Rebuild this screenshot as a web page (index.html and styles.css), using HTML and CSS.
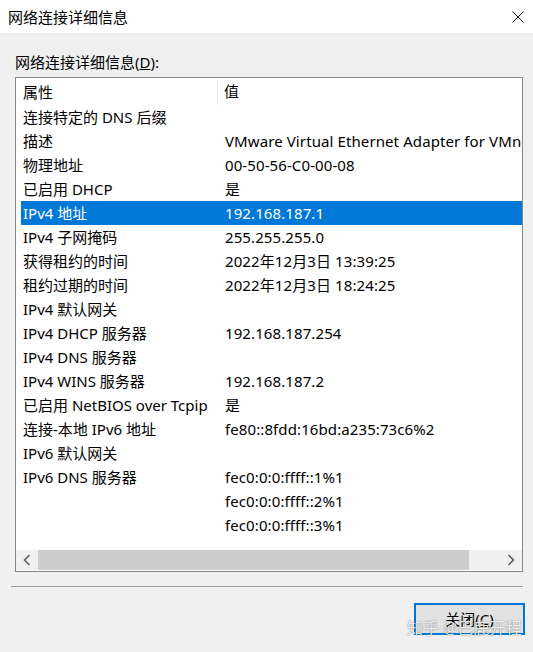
FILE: index.html
```html
<!DOCTYPE html>
<html lang="zh-CN">
<head>
<meta charset="utf-8">
<title>网络连接详细信息</title>
<link rel="stylesheet" href="styles.css">
</head>
<body>
<div class="window">
  <div class="titlebar">
    <span class="title">网络连接详细信息</span>
    <svg class="close" width="12" height="12" viewBox="0 0 12 12"><path d="M0.5 0.5 L11.5 11.5 M11.5 0.5 L0.5 11.5" stroke="#111" stroke-width="1" fill="none"/></svg>
  </div>
  <div class="content">
    <div class="label">网络连接详细信息(<u>D</u>):</div>
    <div class="listbox">
      <div class="list">
        <div class="header">
          <div class="hcell hcell-prop">属性</div>
          <div class="hcell hcell-val">值</div>
        </div>
        <div class="row"><div class="c1">连接特定的 DNS 后缀</div><div class="c2"></div></div>
        <div class="row"><div class="c1">描述</div><div class="c2">VMware Virtual Ethernet Adapter for VMnet8</div></div>
        <div class="row"><div class="c1">物理地址</div><div class="c2">00-50-56-C0-00-08</div></div>
        <div class="row"><div class="c1">已启用 DHCP</div><div class="c2">是</div></div>
        <div class="row selected"><div class="c1">IPv4 地址</div><div class="c2">192.168.187.1</div></div>
        <div class="row"><div class="c1">IPv4 子网掩码</div><div class="c2">255.255.255.0</div></div>
        <div class="row"><div class="c1">获得租约的时间</div><div class="c2">2022年12月3日 13:39:25</div></div>
        <div class="row"><div class="c1">租约过期的时间</div><div class="c2">2022年12月3日 18:24:25</div></div>
        <div class="row"><div class="c1">IPv4 默认网关</div><div class="c2"></div></div>
        <div class="row"><div class="c1">IPv4 DHCP 服务器</div><div class="c2">192.168.187.254</div></div>
        <div class="row"><div class="c1">IPv4 DNS 服务器</div><div class="c2"></div></div>
        <div class="row"><div class="c1">IPv4 WINS 服务器</div><div class="c2">192.168.187.2</div></div>
        <div class="row"><div class="c1">已启用 NetBIOS over Tcpip</div><div class="c2">是</div></div>
        <div class="row"><div class="c1">连接-本地 IPv6 地址</div><div class="c2">fe80::8fdd:16bd:a235:73c6%2</div></div>
        <div class="row"><div class="c1">IPv6 默认网关</div><div class="c2"></div></div>
        <div class="row"><div class="c1">IPv6 DNS 服务器</div><div class="c2">fec0:0:0:ffff::1%1</div></div>
        <div class="row"><div class="c1"></div><div class="c2">fec0:0:0:ffff::2%1</div></div>
        <div class="row"><div class="c1"></div><div class="c2">fec0:0:0:ffff::3%1</div></div>
      </div>
      <div class="hscroll">
        <div class="arrow">
          <svg width="8" height="12" viewBox="0 0 8 12"><path d="M6.5 1 L1.5 6 L6.5 11" stroke="#606060" stroke-width="1.6" fill="none"/></svg>
        </div>
        <div class="track"><div class="thumb"></div></div>
        <div class="arrow">
          <svg width="8" height="12" viewBox="0 0 8 12"><path d="M1.5 1 L6.5 6 L1.5 11" stroke="#606060" stroke-width="1.6" fill="none"/></svg>
        </div>
      </div>
    </div>
    <div class="separator"></div>
    <div class="footer">
      <button class="btn" type="button">关闭(<u>C</u>)</button>
      <span class="watermark">知乎 @巴鹿开程</span>
    </div>
  </div>
</div>
</body>
</html>
```

FILE: styles.css
```css
html, body {
  margin: 0;
  padding: 0;
}
body {
  width: 533px;
  height: 652px;
  overflow: hidden;
  font-family: "Noto Sans", "Noto Sans CJK SC", sans-serif;
  font-size: 15px;
  color: #000;
  background: #f0f0f0;
}
.window {
  display: flex;
  flex-direction: column;
  height: 652px;
}
.titlebar {
  height: 33px;
  background: #fff;
  display: flex;
  align-items: center;
  justify-content: space-between;
  padding: 0 9px 0 8px;
  flex: none;
}
.title {
  font-size: 15px;
  line-height: 20px;
}
.close {
  display: block;
}
.content {
  flex: 1;
  background: #f0f0f0;
  padding: 0 10px 0 15px;
}
.label {
  margin-top: 19px;
  line-height: 20px;
  height: 20px;
}
.listbox {
  margin-top: 5px;
  width: 506px;
  height: 493px;
  border: 1px solid #828790;
  background: #fff;
  display: flex;
  flex-direction: column;
}
.list {
  flex: 1;
  overflow: hidden;
}
.header {
  display: flex;
  height: 27px;
  line-height: 27px;
}
.hcell-prop {
  width: 202px;
  padding-left: 7px;
  box-sizing: border-box;
  border-right: 1px solid #e5e5e5;
  margin: 2px 0 0;
  line-height: 25px;
}
.hcell-val {
  padding-left: 6px;
}
.row {
  display: flex;
  margin-left: 5px;
  height: 24px;
  line-height: 24px;
  white-space: nowrap;
  width: 640px;
}
.c1 {
  width: 202px;
  flex: none;
  padding-left: 2px;
  box-sizing: border-box;
}
.c2 {
  padding-left: 2px;
  letter-spacing: 0.1px;
}
.row.selected {
  background: #0078d7;
  color: #fff;
}
.hscroll {
  height: 20px;
  display: flex;
  background: #f0f0f0;
  margin-bottom: 1px;
  flex: none;
}
.arrow {
  width: 22px;
  display: flex;
  align-items: center;
  justify-content: center;
  flex: none;
}
.track {
  flex: 1;
  display: flex;
}
.thumb {
  width: 431px;
  background: #cdcdcd;
}
.separator {
  margin: 14px 0 0 -4px;
  height: 1px;
  width: 512px;
  background: #a0a0a0;
}
.footer {
  position: relative;
  display: flex;
  justify-content: flex-end;
  padding-top: 16px;
}
.btn {
  width: 111px;
  height: 32px;
  margin-right: -2px;
  border: 2px solid #0078d7;
  background: #e1e1e1;
  font-family: "Noto Sans", "Noto Sans CJK SC", sans-serif;
  font-size: 15px;
  color: #000;
  padding: 0;
  line-height: 26px;
}
.watermark {
  position: absolute;
  left: 392px;
  top: 30px;
  font-size: 16px;
  line-height: 22px;
  color: rgba(255, 255, 255, 0.88);
  text-shadow: 0 0 1px rgba(0, 0, 0, 0.45), 0 0 2px rgba(0, 0, 0, 0.2);
  white-space: nowrap;
}
```
